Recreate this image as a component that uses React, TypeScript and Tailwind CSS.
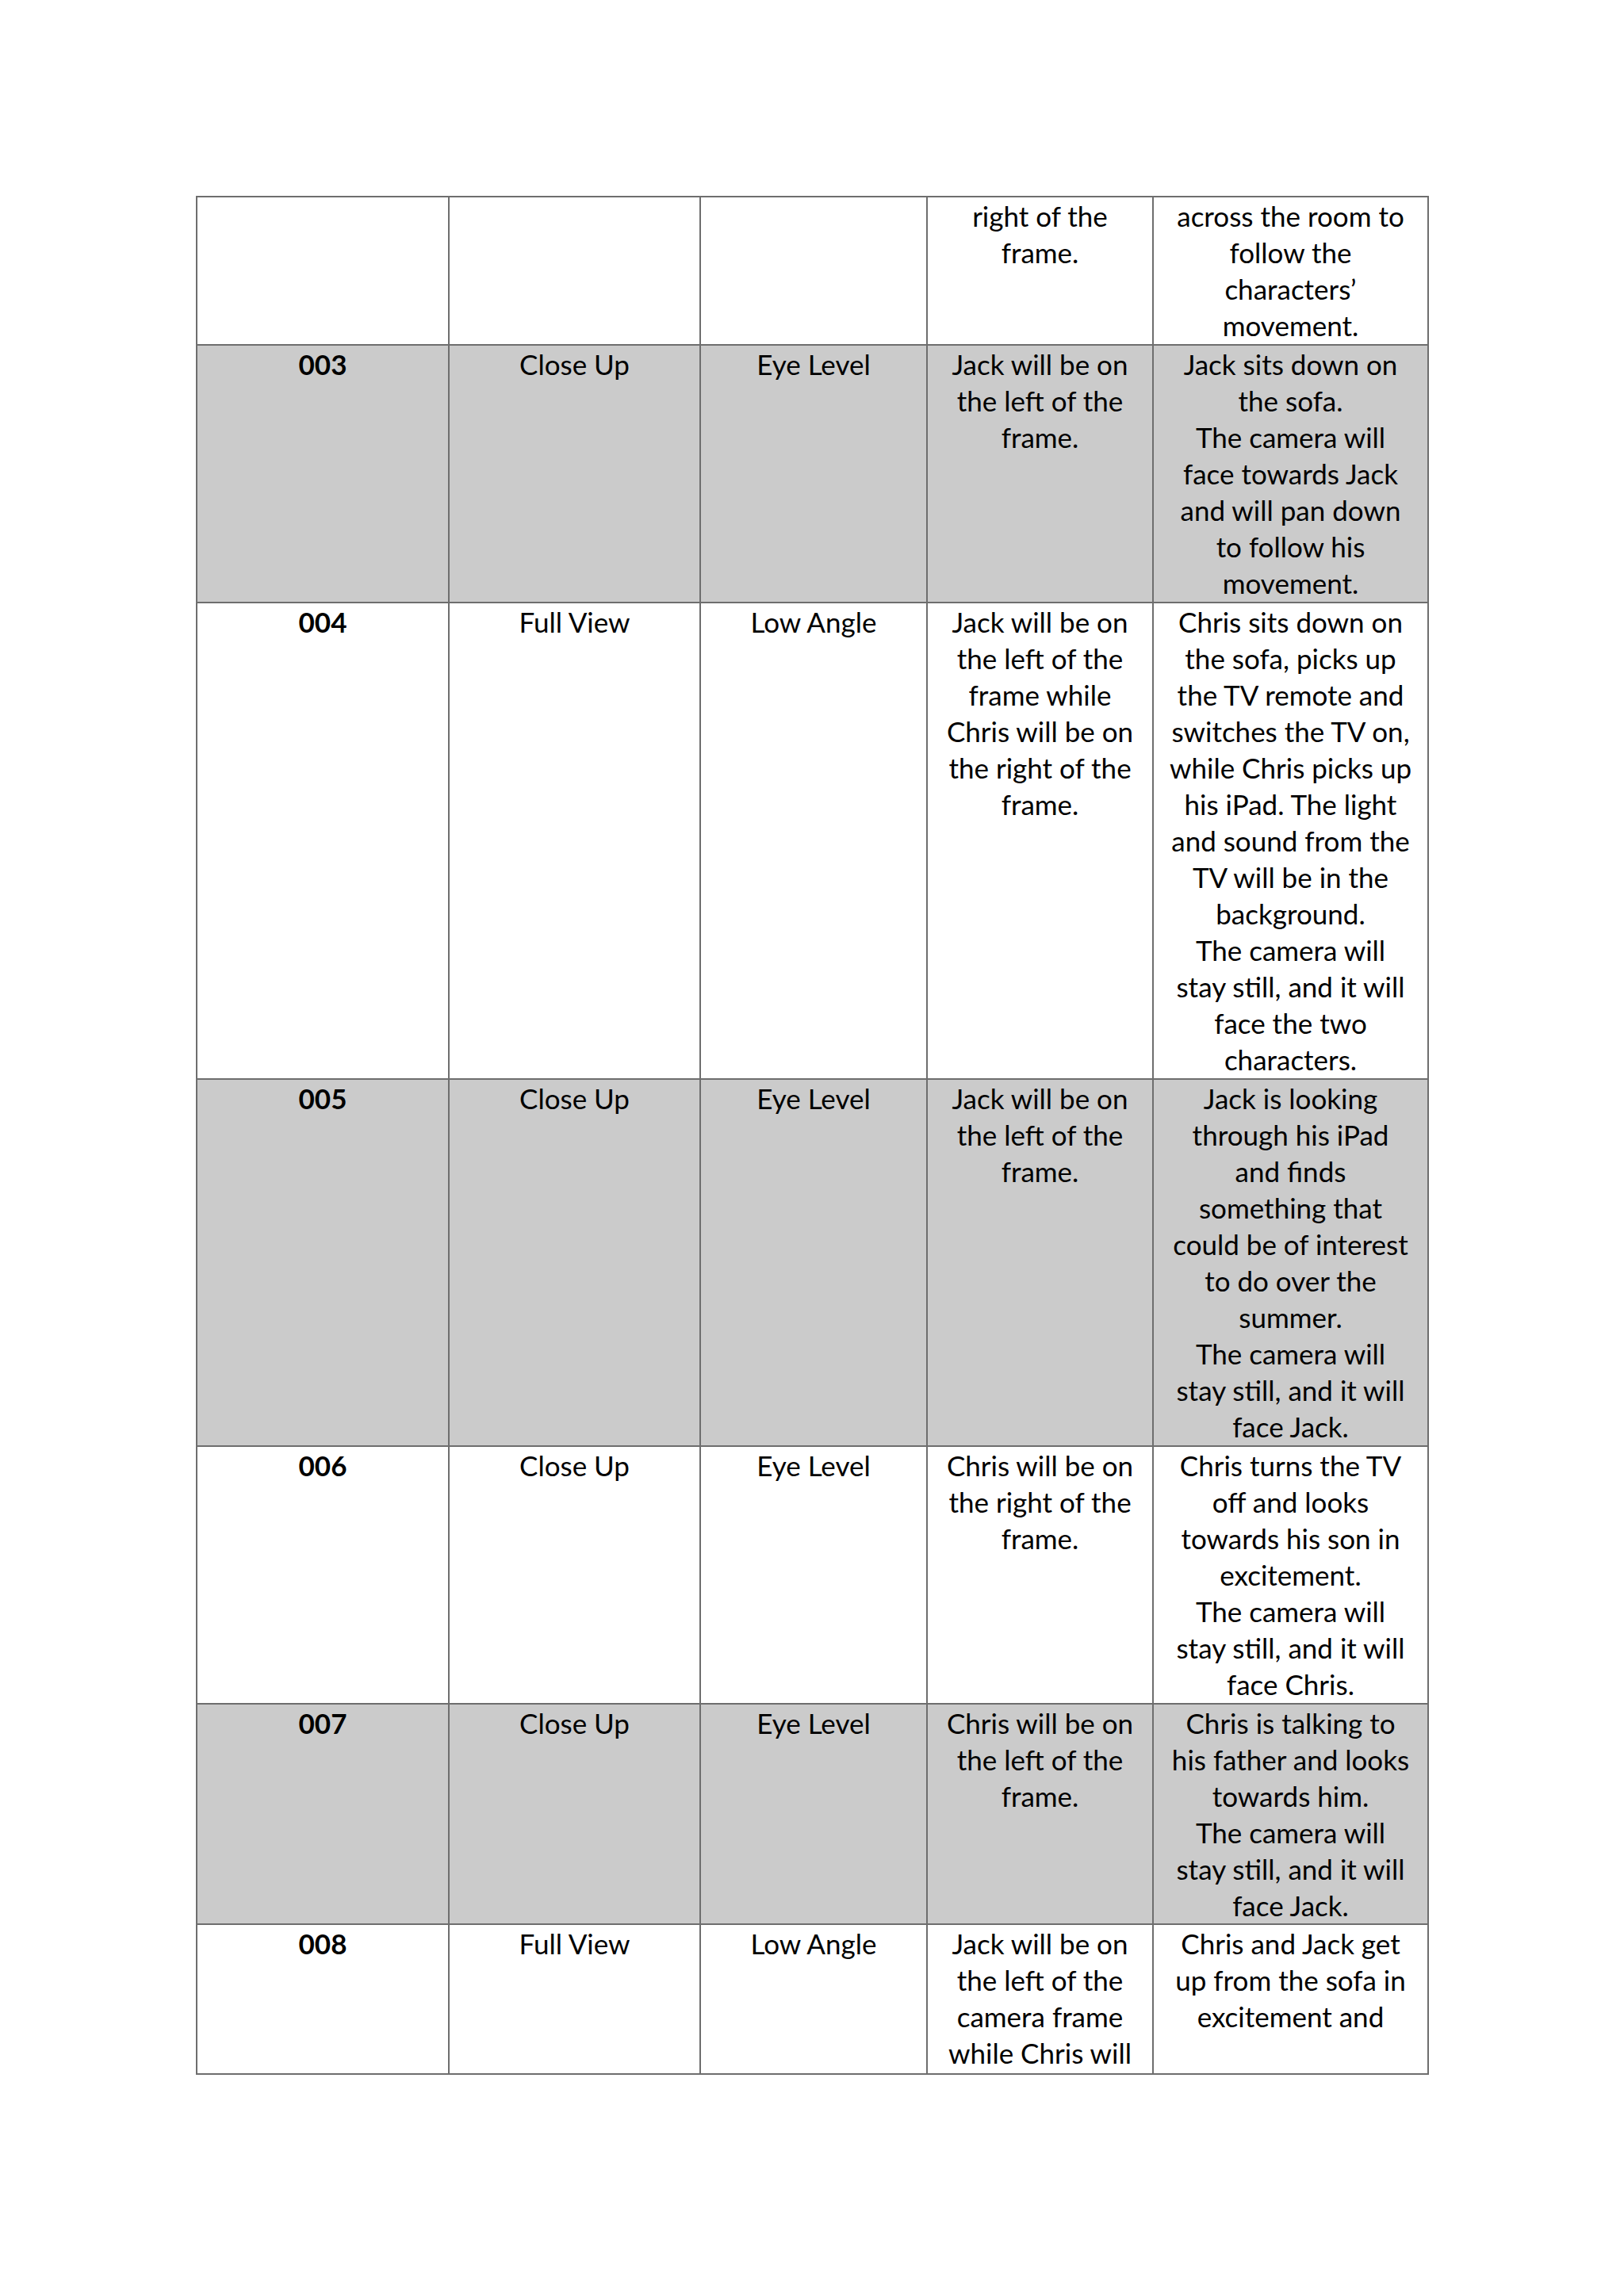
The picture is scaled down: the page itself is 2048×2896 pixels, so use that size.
import React from "react";

type Row = {
  shade: boolean;
  h: string;
  id: string;
  shot: string;
  angle: string;
  frame: string[];
  action: string[];
};

const rows: Row[] = [
  {
    shade: false,
    h: "h-[187px]",
    id: "",
    shot: "",
    angle: "",
    frame: ["right of the", "frame."],
    action: ["across the room to", "follow the", "characters’", "movement."],
  },
  {
    shade: true,
    h: "h-[325px]",
    id: "003",
    shot: "Close Up",
    angle: "Eye Level",
    frame: ["Jack will be on", "the left of the", "frame."],
    action: [
      "Jack sits down on",
      "the sofa.",
      "The camera will",
      "face towards Jack",
      "and will pan down",
      "to follow his",
      "movement.",
    ],
  },
  {
    shade: false,
    h: "h-[601px]",
    id: "004",
    shot: "Full View",
    angle: "Low Angle",
    frame: [
      "Jack will be on",
      "the left of the",
      "frame while",
      "Chris will be on",
      "the right of the",
      "frame.",
    ],
    action: [
      "Chris sits down on",
      "the sofa, picks up",
      "the TV remote and",
      "switches the TV on,",
      "while Chris picks up",
      "his iPad. The light",
      "and sound from the",
      "TV will be in the",
      "background.",
      "The camera will",
      "stay still, and it will",
      "face the two",
      "characters.",
    ],
  },
  {
    shade: true,
    h: "h-[463px]",
    id: "005",
    shot: "Close Up",
    angle: "Eye Level",
    frame: ["Jack will be on", "the left of the", "frame."],
    action: [
      "Jack is looking",
      "through his iPad",
      "and finds",
      "something that",
      "could be of interest",
      "to do over the",
      "summer.",
      "The camera will",
      "stay still, and it will",
      "face Jack.",
    ],
  },
  {
    shade: false,
    h: "h-[325px]",
    id: "006",
    shot: "Close Up",
    angle: "Eye Level",
    frame: ["Chris will be on", "the right of the", "frame."],
    action: [
      "Chris turns the TV",
      "off and looks",
      "towards his son in",
      "excitement.",
      "The camera will",
      "stay still, and it will",
      "face Chris.",
    ],
  },
  {
    shade: true,
    h: "h-[278px]",
    id: "007",
    shot: "Close Up",
    angle: "Eye Level",
    frame: ["Chris will be on", "the left of the", "frame."],
    action: [
      "Chris is talking to",
      "his father and looks",
      "towards him.",
      "The camera will",
      "stay still, and it will",
      "face Jack.",
    ],
  },
  {
    shade: false,
    h: "h-[189px]",
    id: "008",
    shot: "Full View",
    angle: "Low Angle",
    frame: ["Jack will be on", "the left of the", "camera frame", "while Chris will"],
    action: ["Chris and Jack get", "up from the sofa in", "excitement and"],
  },
];

function Cell({ lines, bold, last }: { lines: string[]; bold?: boolean; last?: boolean }) {
  return (
    <div
      className={`flex flex-col items-center ${last ? "" : "border-r-2 border-[#6e6e6e]"} ${
        bold ? "font-bold" : ""
      }`}
    >
      {lines.map((l, i) => (
        <span key={i} className="whitespace-nowrap">
          {l}
        </span>
      ))}
    </div>
  );
}

export default function App() {
  return (
    <div className="w-[2048px] h-[2896px] bg-white pt-[247px] pl-[247px]">
      <div
        className="w-[1555px] border-2 border-b-0 border-[#6e6e6e] text-[35px] leading-[46px] text-black"
        style={{ fontFamily: "Lato, 'Open Sans', sans-serif" }}
      >
        {rows.map((r, i) => (
          <div
            key={i}
            className={`grid grid-cols-[318px_317px_286px_285px_345px] border-b-2 border-[#6e6e6e] ${r.h} ${
              r.shade ? "bg-[#cbcbcb]" : "bg-white"
            }`}
          >
            <Cell lines={r.id ? [r.id] : []} bold />
            <Cell lines={r.shot ? [r.shot] : []} />
            <Cell lines={r.angle ? [r.angle] : []} />
            <Cell lines={r.frame} />
            <Cell lines={r.action} last />
          </div>
        ))}
      </div>
    </div>
  );
}
